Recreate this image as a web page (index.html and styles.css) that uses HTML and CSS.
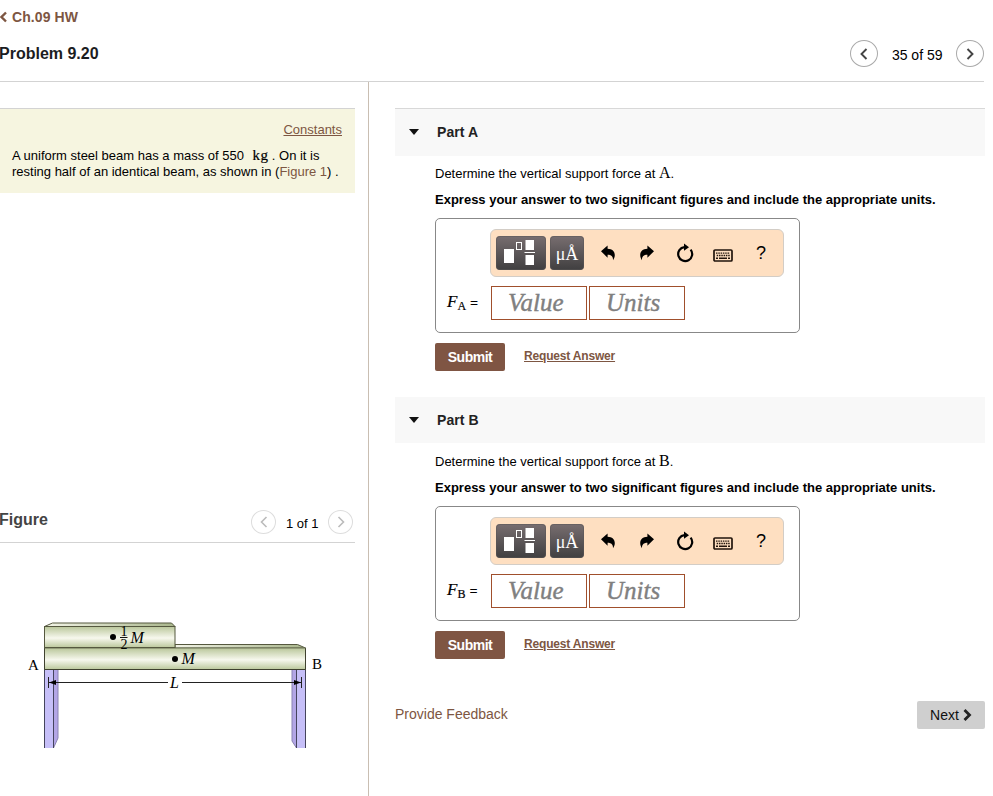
FILE: index.html
```html
<!DOCTYPE html>
<html lang="en">
<head>
    <meta charset="UTF-8">
    <meta name="viewport" content="width=device-width, initial-scale=1.0">
    <title>Ch.09 HW - Problem 9.20</title>
    <link rel="stylesheet" href="styles.css">
</head>
<body>

<!-- Shared toolbar icons -->
<svg class="icon-defs" width="0" height="0">
    <symbol id="icon-template" viewBox="0 0 50 34">
        <rect x="8" y="13" width="10" height="14" fill="#fff"/>
        <rect x="20.500" y="6.500" width="5" height="7" fill="none" stroke="#fff"/>
        <rect x="29.500" y="4" width="8.500" height="10" fill="#fff"/>
        <path d="M28.500 16.500h10.500" stroke="#fff"/>
        <rect x="29.500" y="19" width="8.500" height="10" fill="#fff"/>
    </symbol>
    <symbol id="icon-undo" viewBox="0 0 14 16">
        <path d="M0 6.300 6.600 .5v3.200c4.600 .2 7.200 2.600 7.200 6.400 0 2-.7 3.700-1.800 5.200.2-3.800-1.500-5.500-5.400-5.600v3z"/>
    </symbol>
    <symbol id="icon-reset" viewBox="0 0 18 20">
        <path d="M14.600 6.600A7 7 0 1 1 8.500 4.100" fill="none" stroke="#000" stroke-width="2.200"/>
        <path d="M8 .6 13 4.200 8 7.800z"/>
    </symbol>
    <symbol id="icon-keyboard" viewBox="0 0 20 13">
        <rect x="1" y="1" width="18" height="11" rx="1" fill="none" stroke="#21140c" stroke-width="1.700"/>
        <path d="M3 4.200h14M3.700 6.500h13" stroke="#21140c" stroke-width="1.300" stroke-dasharray="1.500 .8"/>
        <path d="M3 9.200h2M6 9.200h8M15 9.200h2" stroke="#21140c" stroke-width="1.400"/>
    </symbol>
</svg>

<header class="page-header">
    <a class="back-link">
        <svg width="7" height="12" viewBox="0 0 7 12"><path d="M6 1.500 1.500 6 6 10.500" fill="none" stroke="#7d5642" stroke-width="2.400"/></svg>
        <span>Ch.09 HW</span>
    </a>
    <div class="title-row">
        <h1>Problem 9.20</h1>
        <div class="pager">
            <button class="round-btn"><svg width="8" height="12" viewBox="0 0 8 12"><path d="M6.500 1 1.500 6l5 5"/></svg></button>
            <span>35 of 59</span>
            <button class="round-btn"><svg width="8" height="12" viewBox="0 0 8 12"><path d="M1.500 1l5 5-5 5"/></svg></button>
        </div>
    </div>
</header>

<main class="content">
    <aside class="sidebar">
        <section class="problem">
            <a class="constants">Constants</a>
            <p>A uniform steel beam has a mass of 550 <span class="math unit">kg</span> . On it is<br>resting half of an identical beam, as shown in (<a class="figure-link">Figure 1</a>) .</p>
        </section>

        <div class="figure-header">
            <h2>Figure</h2>
            <div class="pager small">
                <button class="round-btn"><svg width="8" height="12" viewBox="0 0 8 12"><path d="M6.500 1 1.500 6l5 5"/></svg></button>
                <span>1 of 1</span>
                <button class="round-btn"><svg width="8" height="12" viewBox="0 0 8 12"><path d="M1.500 1l5 5-5 5"/></svg></button>
            </div>
        </div>

        <svg class="figure" width="340" height="150" viewBox="0 610 340 150">
            <defs>
                <linearGradient id="beam" x1="0" y1="0" x2="0" y2="1">
                    <stop offset="0" stop-color="#b9c69a"/>
                    <stop offset=".55" stop-color="#f7f8ee"/>
                    <stop offset="1" stop-color="#bbc89c"/>
                </linearGradient>
                <linearGradient id="beam-top" x1="0" y1="0" x2="1" y2="0">
                    <stop offset="0" stop-color="#f2f4e6"/>
                    <stop offset="1" stop-color="#a9b68c"/>
                </linearGradient>
            </defs>
            <!-- Supports -->
            <path d="M53.500 669h4.500v69l-4.500 10z" fill="#b3a6e6" stroke="#8a82b4"/>
            <path d="M44 669h9.500v79H44z" fill="#c6bff8"/>
            <path d="M44.500 669v79M53.500 669v79" stroke="#45445c"/>
            <path d="M292 669h4.500v79l-4.500-7z" fill="#b3a6e6" stroke="#8a82b4"/>
            <path d="M296.500 669h9v79h-9z" fill="#c6bff8"/>
            <path d="M296.500 669v79M305.500 669v79" stroke="#45445c"/>
            <!-- Beams -->
            <path d="M175 644.500h122.500l8 3.500H175z" fill="url(#beam-top)" stroke="#55583f"/>
            <rect x="44.500" y="648" width="261" height="21.500" fill="url(#beam)"/>
            <path d="M44.500 648v21.500h261V648" fill="none" stroke="#3f412f"/>
            <path d="M44.500 648h261" stroke="#6e7458"/>
            <path d="M44.500 626.500l8-3.500h119l3.500 3.500z" fill="url(#beam-top)" stroke="#55583f"/>
            <rect x="44.500" y="626.500" width="130.500" height="21" fill="url(#beam)" stroke="#55583f"/>
            <circle cx="113" cy="637" r="3"/>
            <circle cx="175" cy="659" r="3"/>
            <path d="M120 637.500h7.500" stroke="#111"/>
            <text x="120.500" y="635.500" font-size="14">1</text>
            <text x="120.500" y="649" font-size="14">2</text>
            <text class="italic" x="130.500" y="643">M</text>
            <text class="italic" x="181.500" y="664">M</text>
            <!-- Length -->
            <path d="M49 682.500h119M182 682.500h119M48.500 677v11M301.500 677v11" stroke="#222" fill="none"/>
            <path d="M49 682.500l7-2.500v5zM301 682.500l-7-2.500v5z"/>
            <text class="italic" x="170" y="688">L</text>
            <text x="28" y="670" font-size="15">A</text>
            <text x="312" y="669" font-size="15">B</text>
        </svg>
    </aside>

    <div class="parts">
        <section class="part">
            <div class="part-header"><i class="caret"></i><h3>Part A</h3></div>
            <div class="part-body">
                <p class="question">Determine the vertical support force at <span class="math">A</span>.</p>
                <p class="instructions">Express your answer to two significant figures and include the appropriate units.</p>
                <div class="answer-box">
                    <div class="toolbar">
                        <button class="dark-btn wide"><svg width="50" height="34"><use href="#icon-template"/></svg></button>
                        <button class="dark-btn">μÅ</button>
                        <svg class="tool undo" width="14" height="16"><use href="#icon-undo"/></svg>
                        <svg class="tool redo" width="14" height="16"><use href="#icon-undo"/></svg>
                        <svg class="tool reset" width="18" height="20"><use href="#icon-reset"/></svg>
                        <svg class="tool keyboard" width="20" height="13"><use href="#icon-keyboard"/></svg>
                        <span class="help">?</span>
                    </div>
                    <div class="answer-row">
                        <label><em>F</em><sub>A</sub> <span class="equals">=</span></label>
                        <div class="field">Value</div>
                        <div class="field">Units</div>
                    </div>
                </div>
                <div class="actions">
                    <button class="submit-btn">Submit</button>
                    <a class="request">Request Answer</a>
                </div>
            </div>
        </section>

        <section class="part">
            <div class="part-header"><i class="caret"></i><h3>Part B</h3></div>
            <div class="part-body">
                <p class="question">Determine the vertical support force at <span class="math">B</span>.</p>
                <p class="instructions">Express your answer to two significant figures and include the appropriate units.</p>
                <div class="answer-box">
                    <div class="toolbar">
                        <button class="dark-btn wide"><svg width="50" height="34"><use href="#icon-template"/></svg></button>
                        <button class="dark-btn">μÅ</button>
                        <svg class="tool undo" width="14" height="16"><use href="#icon-undo"/></svg>
                        <svg class="tool redo" width="14" height="16"><use href="#icon-undo"/></svg>
                        <svg class="tool reset" width="18" height="20"><use href="#icon-reset"/></svg>
                        <svg class="tool keyboard" width="20" height="13"><use href="#icon-keyboard"/></svg>
                        <span class="help">?</span>
                    </div>
                    <div class="answer-row">
                        <label><em>F</em><sub>B</sub> <span class="equals">=</span></label>
                        <div class="field">Value</div>
                        <div class="field">Units</div>
                    </div>
                </div>
                <div class="actions">
                    <button class="submit-btn">Submit</button>
                    <a class="request">Request Answer</a>
                </div>
            </div>
        </section>

        <footer class="part-footer">
            <a class="feedback">Provide Feedback</a>
            <button class="next-btn">Next <svg width="9" height="12" viewBox="0 0 9 12"><path d="M1.500 1 6.500 6l-5 5" fill="none" stroke="#222" stroke-width="2.800"/></svg></button>
        </footer>
    </div>
</main>

</body>
</html>
```

FILE: styles.css
```css
* {
    box-sizing: border-box;
}

body {
    margin: 0;
    height: 796px;
    overflow: hidden;
    background: #fff;
    color: #000;
    font-family: "Liberation Sans", Arial, sans-serif;
    font-size: 13px;
}

h1, h2, h3, p {
    margin: 0;
}

button {
    border: none;
    padding: 0;
    font-family: inherit;
    cursor: pointer;
}

svg {
    display: block;
}

.icon-defs {
    position: absolute;
}

/* Header */
.page-header {
    height: 82px;
    margin-right: 9px;
    border-bottom: 1px solid #d3d3d3;
}

.back-link {
    display: flex;
    align-items: center;
    gap: 5px;
    height: 34px;
    color: #7d5642;
    font-size: 14px;
    font-weight: bold;
    letter-spacing: 0.1px;
}

.title-row {
    display: flex;
    justify-content: space-between;
    height: 40px;
}

.title-row h1 {
    margin-left: -1px;
    color: #1b1d1f;
    font-size: 16px;
    line-height: 39px;
}

.pager {
    display: flex;
    align-items: center;
    gap: 13.500px;
    height: 39px;
    font-size: 14px;
}

.pager span {
    padding-top: 3px;
}

.round-btn {
    display: flex;
    align-items: center;
    justify-content: center;
    width: 28px;
    height: 27px;
    border: 1px solid #aaa;
    border-radius: 50%;
    background: #fff;
}

.round-btn path {
    fill: none;
    stroke: #444;
    stroke-width: 1.9;
}

/* Left column */
.content {
    display: flex;
    height: 714px;
}

.sidebar {
    width: 369px;
    padding: 26px 13px 0 0;
    border-right: 1px solid #c9beb2;
}

.problem {
    height: 85px;
    padding: 13px 13px 0 12px;
    border-top: 1px solid #d3d3d3;
    background: #f6f5e0;
}

.constants {
    display: block;
    color: #7d5642;
    line-height: 16px;
    text-align: right;
    text-decoration: underline;
}

.problem p {
    margin-top: 10px;
    line-height: 16px;
    white-space: nowrap;
}

.math {
    font-family: "Liberation Serif", serif;
    font-size: 16px;
    line-height: 1px;
}

.math.unit {
    margin-left: 5px;
    font-size: 15px;
    letter-spacing: 0.3px;
    -webkit-text-stroke: 0.2px #000;
}

.figure-link {
    color: #7d5642;
}

.figure-header {
    display: flex;
    justify-content: space-between;
    height: 43px;
    margin-top: 307px;
    padding-right: 2px;
    border-bottom: 1px solid #d3d3d3;
}

.figure-header h2 {
    margin-left: -1px;
    color: #444;
    font-size: 16px;
    line-height: 40px;
}

.pager.small {
    gap: 9.500px;
    height: 44px;
    font-size: 13px;
}

.small .round-btn {
    width: 25px;
    height: 24px;
    border-color: #ddd;
}

.small .round-btn path {
    stroke: #bbb;
    stroke-width: 1.6;
}

.figure {
    margin-top: 67px;
    font-family: "Liberation Serif", serif;
}

.figure .italic {
    font-size: 16px;
    font-style: italic;
}

/* Right column */
.parts {
    width: 590px;
    margin: 26px 0 0 26px;
}

.part {
    height: 288px;
}

.part-header {
    display: flex;
    align-items: center;
    height: 48px;
    padding: 0 0 2px 14px;
    border-top: 1px solid #d8d8d8;
    background: #f8f8f8;
}

.part + .part .part-header {
    height: 46px;
    margin: 1px 0;
    padding-bottom: 1px;
    border-top: none;
}

.caret {
    border: 5.500px solid transparent;
    border-top: 6px solid #111;
    border-bottom: none;
}

.part-header h3 {
    margin-left: 18px;
    color: #222;
    font-size: 14px;
    letter-spacing: 0.1px;
}

.part-body {
    padding-left: 40px;
}

.question {
    padding-top: 10px;
    line-height: 16px;
}

.instructions {
    margin-top: 10px;
    font-weight: bold;
    line-height: 16px;
}

.answer-box {
    width: 365px;
    height: 115px;
    margin-top: 10px;
    padding: 10px 0 0 11px;
    border: 1px solid #888;
    border-radius: 5px;
}

.toolbar {
    display: flex;
    align-items: center;
    width: 294px;
    height: 48px;
    margin-left: 43px;
    padding-left: 5px;
    border: 1px solid #d3cdc6;
    border-radius: 6px;
    background: #fedfc1;
}

.dark-btn {
    width: 34px;
    height: 34px;
    padding-top: 3px;
    border-radius: 4px;
    background: linear-gradient(#786e70, #403f40);
    box-shadow: inset 0 0 0 1px rgba(90, 85, 85, 0.5);
    color: #fff;
    font-family: "Liberation Serif", serif;
    font-size: 18px;
}

.dark-btn.wide {
    width: 50px;
    margin-right: 4px;
    padding-top: 0;
}

.undo {
    margin-left: 17px;
}

.redo {
    margin-left: 25px;
    transform: scaleX(-1);
}

.reset {
    margin-left: 22px;
}

.keyboard {
    margin: 4px 0 0 19px;
}

.help {
    margin-left: 23px;
    font-size: 18px;
}

.answer-row {
    display: flex;
    gap: 2px;
    margin-top: 9px;
}

.answer-row label {
    width: 42px;
    font-family: "Liberation Serif", serif;
    font-size: 17px;
    line-height: 32px;
    white-space: nowrap;
    -webkit-text-stroke: 0.2px #000;
}

.answer-row sub {
    font-size: 12px;
    line-height: 1px;
    vertical-align: -3px;
}

.equals {
    font-family: "Liberation Sans", Arial, sans-serif;
    font-size: 13px;
}

.field {
    width: 96px;
    height: 34px;
    padding-left: 16px;
    border: 1px solid #a04f2c;
    color: #808080;
    font-family: "Liberation Serif", serif;
    font-size: 25px;
    font-style: italic;
    line-height: 31px;
    -webkit-text-stroke: 0.4px #808080;
}

.actions {
    display: flex;
    gap: 19px;
    margin-top: 10px;
}

.submit-btn {
    width: 70px;
    height: 28px;
    border-radius: 2px;
    background: #7f5543;
    color: #fff;
    font-size: 14px;
    font-weight: bold;
    letter-spacing: -0.5px;
}

.request {
    color: #7d5642;
    font-size: 12px;
    font-weight: bold;
    letter-spacing: -0.18px;
    line-height: 26px;
    text-decoration: underline;
}

.part-footer {
    display: flex;
    justify-content: space-between;
    margin-top: 16px;
}

.feedback {
    color: #7d5642;
    font-size: 14px;
    line-height: 26px;
}

.next-btn {
    display: flex;
    align-items: center;
    justify-content: center;
    gap: 4px;
    width: 68px;
    height: 28px;
    border-radius: 2px;
    background: #cfcfcf;
    color: #111;
    font-size: 14px;
}
```
